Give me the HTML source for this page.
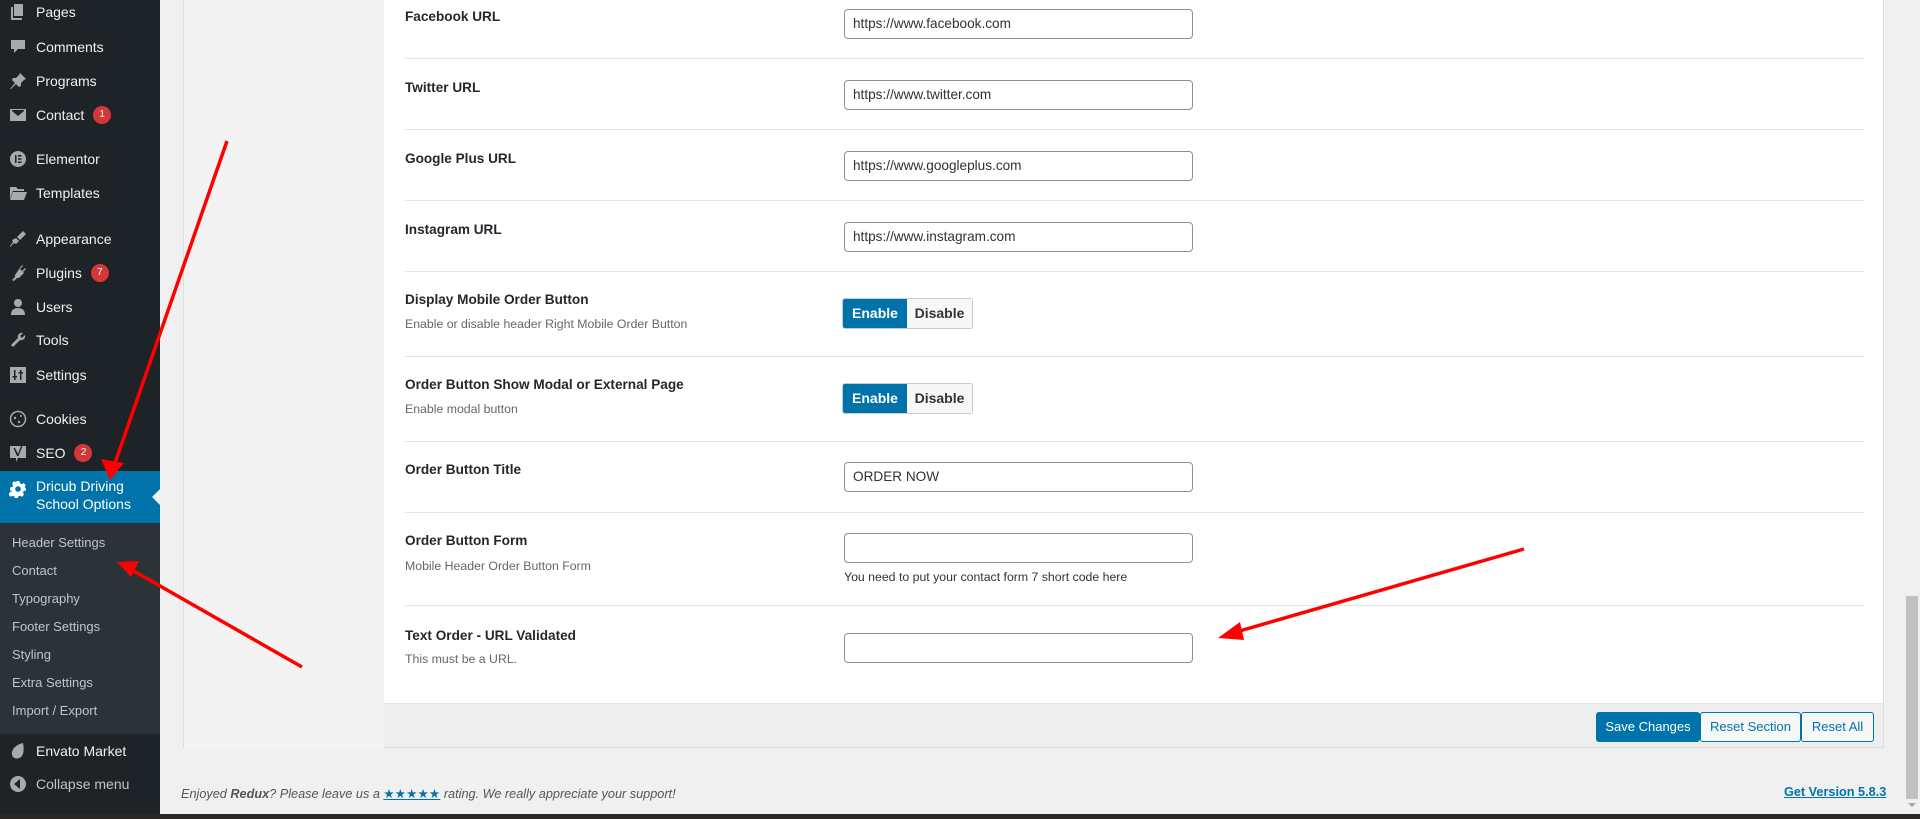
<!DOCTYPE html>
<html><head><meta charset="utf-8"><style>
*{box-sizing:border-box;margin:0;padding:0}
body{width:1920px;height:819px;overflow:hidden;background:#f0f0f0;font-family:"Liberation Sans",sans-serif;position:relative}
#sb{position:absolute;left:0;top:0;width:160px;height:814px;background:#1d2327}
.mi{position:absolute;left:0;width:160px;color:#f0f0f1;font-size:14px;line-height:18px}
.mi .ic{position:absolute;left:9px;top:0;width:18px;height:18px;color:#9ca2a7}
.mi .t{position:absolute;left:36px;top:0;white-space:nowrap}
.badge{display:inline-block;background:#d63638;color:#fff;border-radius:9px;font-size:10px;line-height:18px;min-width:18px;text-align:center;margin-left:5px;vertical-align:top}
#act{position:absolute;left:0;top:471px;width:160px;height:52px;background:#0073aa}
#sub{position:absolute;left:0;top:523px;width:160px;height:211px;background:#2c3338}
.si{position:absolute;left:12px;color:#c3c4c7;font-size:13px}
#nav{position:absolute;left:183px;top:0;width:202px;height:748px;background:#f3f3f3;border-left:1px solid #ddd;border-right:1px solid #e5e5e5}
#panel{position:absolute;left:384px;top:0;width:1500px;height:703px;background:#fff;border-right:1px solid #ddd}
#bar{position:absolute;left:384px;top:703px;width:1500px;height:45px;background:#eee;border-top:1px solid #e5e5e5;border-bottom:1px solid #ddd;border-right:1px solid #ddd}
.hr{position:absolute;left:405px;width:1459px;height:1px;background:#e5e5e5}
.lb{position:absolute;left:405px;font-size:13.6px;font-weight:bold;color:#23282d}
.ds{position:absolute;left:405px;font-size:12.3px;color:#666}
.in{position:absolute;left:844px;width:349px;height:30px;border:1px solid #8c8f94;border-radius:4px;font-size:13.6px;color:#2c3338;padding:6px 8px;background:#fff}
.bg{position:absolute;left:842px;width:131px;height:31px;border:1px solid #ccc;border-radius:3px;overflow:hidden;font-size:14px;font-weight:bold}
.bg .e{position:absolute;left:0;top:0;width:64px;height:100%;background:#0073aa;color:#fff;text-align:center;line-height:29px}
.bg .d{position:absolute;left:64px;top:0;right:0;height:100%;background:#f7f7f7;color:#333;text-align:center;line-height:29px}
.btn{position:absolute;top:712px;height:30px;font-size:13px;line-height:28px;text-align:center;border:1px solid #0073aa;border-radius:3px;color:#0073aa;background:#f6f7f7}
</style></head><body>
<div id="sb">
<div class="mi" style="top:3px"><svg class="ic" viewBox="0 0 18 18"><path fill="#a7aaad" d="M5 1h9v12H5zM2 4h2v11h9v2H2z"/></svg><span class="t">Pages</span></div>
<div class="mi" style="top:38px"><svg class="ic" viewBox="0 0 18 18"><path fill="#a7aaad" d="M2 2h14v9H9l-4 4v-4H2z"/></svg><span class="t">Comments</span></div>
<div class="mi" style="top:72px"><svg class="ic" viewBox="0 0 18 18"><path fill="#a7aaad" d="M11 1l6 6-2 1-3 3 0 3-2 1-3-3-5 5-1 0 5-6-3-3 1-2 3 0 3-3z"/></svg><span class="t">Programs</span></div>
<div class="mi" style="top:106px"><svg class="ic" viewBox="0 0 18 18"><path fill="#a7aaad" d="M1 3h16v12H1zM3 5l6 5 6-5v-1H3z"/></svg><span class="t">Contact <span class="badge">1</span></span></div>
<div class="mi" style="top:150px"><svg class="ic" viewBox="0 0 18 18"><circle cx="9" cy="9" r="8" fill="#a7aaad"/><path fill="#1d2327" d="M6 5h1.5v8H6zM9 5h3.5v1.5H9zM9 8.3h3.5v1.5H9zM9 11.5h3.5V13H9z"/></svg><span class="t">Elementor</span></div>
<div class="mi" style="top:184px"><svg class="ic" viewBox="0 0 18 18"><path fill="#a7aaad" d="M1 3h6l2 2h6v2H4l-3 8zM4 8h14l-3 8H1z"/></svg><span class="t">Templates</span></div>
<div class="mi" style="top:230px"><svg class="ic" viewBox="0 0 18 18"><path fill="#a7aaad" d="M14 1l3 3-6 6-3-3zM7 8l3 3-3 3-2-1-4 4 0-1 3-4-1-2z"/></svg><span class="t">Appearance</span></div>
<div class="mi" style="top:264px"><svg class="ic" viewBox="0 0 18 18"><path fill="#a7aaad" d="M13 1l1 1-3 3 2 2 3-3 1 1-3 3 1 1-5 5-2 0-3 3-2-1 3-3 0-2z"/></svg><span class="t">Plugins <span class="badge">7</span></span></div>
<div class="mi" style="top:298px"><svg class="ic" viewBox="0 0 18 18"><circle cx="9" cy="5" r="4" fill="#a7aaad"/><path fill="#a7aaad" d="M2 17c0-5 3-7 7-7s7 2 7 7z"/></svg><span class="t">Users</span></div>
<div class="mi" style="top:331px"><svg class="ic" viewBox="0 0 18 18"><path fill="#a7aaad" d="M16 4l-3 3-2-2 3-3c-3-1-6 2-5 5L2 14l2 2 7-7c3 1 6-2 5-5z"/></svg><span class="t">Tools</span></div>
<div class="mi" style="top:366px"><svg class="ic" viewBox="0 0 18 18"><path fill="#a7aaad" d="M1 1h16v16H1z"/><path fill="#1d2327" d="M5 4h1.5v10H5zM3.5 10h4.5v1.5H3.5zM11 4h1.5v10H11zM9.5 6h4.5v1.5H9.5z"/></svg><span class="t">Settings</span></div>
<div class="mi" style="top:410px"><svg class="ic" viewBox="0 0 18 18"><circle cx="9" cy="9" r="7.5" fill="none" stroke="#a7aaad" stroke-width="1.5"/><circle cx="6" cy="8" r="1.2" fill="#a7aaad"/><circle cx="10" cy="12" r="1.2" fill="#a7aaad"/><circle cx="12" cy="6" r="1" fill="#a7aaad"/></svg><span class="t">Cookies</span></div>
<div class="mi" style="top:444px"><svg class="ic" viewBox="0 0 18 18"><path fill="#a7aaad" d="M1 2h16v12H9l-2 4V14H1z"/><path fill="#1d2327" d="M6 4l3 6 3-8h1.5l-4 10H8L4.5 4z"/></svg><span class="t">SEO <span class="badge">2</span></span></div>
</div>
<div id="act"><svg style="position:absolute;left:9px;top:9px" width="18" height="18" viewBox="0 0 18 18"><path fill="#fff" d="M7.5 1h3l.5 2.3 1.5.8 2.2-1 2 2-1 2.2.7 1.5L17 7.5v3l-2.3.5-.7 1.5 1 2.2-2 2-2.2-1-1.5.7-.5 2.3h-3l-.5-2.3-1.5-.7-2.2 1-2-2 1-2.2L3.3 11 1 10.5v-3l2.3-.5.8-1.5-1-2.2 2-2 2.2 1L7 3.3z"/><circle cx="9" cy="9" r="2.8" fill="#0073aa"/></svg>
<div style="position:absolute;left:36px;top:6px;color:#fff;font-size:14px;line-height:18px">Dricub Driving<br>School Options</div>
<div style="position:absolute;right:0;top:18px;width:0;height:0;border-top:8px solid transparent;border-bottom:8px solid transparent;border-right:8px solid #f0f0f0"></div></div>
<div id="sub">
<div class="si" style="top:12px">Header Settings</div>
<div class="si" style="top:40px">Contact</div>
<div class="si" style="top:68px">Typography</div>
<div class="si" style="top:96px">Footer Settings</div>
<div class="si" style="top:124px">Styling</div>
<div class="si" style="top:152px">Extra Settings</div>
<div class="si" style="top:180px">Import / Export</div>
</div>
<div class="mi" style="top:742px"><svg class="ic" viewBox="0 0 18 18"><path fill="#a7aaad" d="M14 1C6 3 2 8 3 13c1 4 7 5 10 1 2-3 2-8 1-13z"/></svg><span class="t">Envato Market</span></div>
<div class="mi" style="top:775px"><svg class="ic" viewBox="0 0 18 18"><circle cx="9" cy="9" r="8" fill="#a7aaad"/><path fill="#1d2327" d="M11 4v10L5 9z"/></svg><span class="t" style="color:#c3c4c7">Collapse menu</span></div>
<div style="position:absolute;left:160px;top:0;width:23px;height:814px;background:#f0f0f0"></div>

<div id="nav"></div>
<div id="panel"></div>
<div id="bar"></div>

<div class="lb" style="top:9px">Facebook URL</div>
<div class="in" style="top:9px">https://www.facebook.com</div>
<div class="hr" style="top:58px"></div>
<div class="lb" style="top:80px">Twitter URL</div>
<div class="in" style="top:80px">https://www.twitter.com</div>
<div class="hr" style="top:129px"></div>
<div class="lb" style="top:151px">Google Plus URL</div>
<div class="in" style="top:151px">https://www.googleplus.com</div>
<div class="hr" style="top:200px"></div>
<div class="lb" style="top:222px">Instagram URL</div>
<div class="in" style="top:222px">https://www.instagram.com</div>
<div class="hr" style="top:271px"></div>
<div class="lb" style="top:292px">Display Mobile Order Button</div>
<div class="ds" style="top:317px">Enable or disable header Right Mobile Order Button</div>
<div class="bg" style="top:298px"><div class="e">Enable</div><div class="d">Disable</div></div>
<div class="hr" style="top:356px"></div>
<div class="lb" style="top:377px">Order Button Show Modal or External Page</div>
<div class="ds" style="top:402px">Enable modal button</div>
<div class="bg" style="top:383px"><div class="e">Enable</div><div class="d">Disable</div></div>
<div class="hr" style="top:441px"></div>
<div class="lb" style="top:462px">Order Button Title</div>
<div class="in" style="top:462px">ORDER NOW</div>
<div class="hr" style="top:512px"></div>
<div class="lb" style="top:533px">Order Button Form</div>
<div class="ds" style="top:559px">Mobile Header Order Button Form</div>
<div class="in" style="top:533px"></div>
<div style="position:absolute;left:844px;top:570px;font-size:12.3px;color:#333">You need to put your contact form 7 short code here</div>
<div class="hr" style="top:605px"></div>
<div class="lb" style="top:628px">Text Order - URL Validated</div>
<div class="ds" style="top:652px">This must be a URL.</div>
<div class="in" style="top:633px"></div>

<div class="btn" style="left:1596px;width:104px;background:#0073aa;color:#fff">Save Changes</div>
<div class="btn" style="left:1700px;width:101px">Reset Section</div>
<div class="btn" style="left:1801px;width:73px">Reset All</div>

<div style="position:absolute;left:181px;top:786px;font-size:12.7px;font-style:italic;color:#555">Enjoyed <b>Redux</b>? Please leave us a <span style="color:#0073aa;text-decoration:underline;font-style:normal">★★★★★</span> rating. We really appreciate your support!</div>
<div style="position:absolute;left:1784px;top:785px;font-size:12.7px;font-weight:bold;color:#0073aa;text-decoration:underline">Get Version 5.8.3</div>

<div style="position:absolute;left:1906px;top:596px;width:12px;height:203px;background:#c1c1c1"></div>
<div style="position:absolute;left:1908px;top:803px;width:0;height:0;border-left:4px solid transparent;border-right:4px solid transparent;border-top:4px solid #a3a3a3"></div>
<div style="position:absolute;left:0;top:814px;width:1920px;height:5px;background:#2a2826"></div>

<svg style="position:absolute;left:0;top:0" width="1920" height="819">
<g stroke="#f00" stroke-width="3.5" fill="#f00">
<line x1="227" y1="141" x2="114" y2="466"/><polygon points="110,480 101,459 124,463" stroke="none"/>
<line x1="302" y1="667" x2="132" y2="570"/><polygon points="117,562 139,561 131,577" stroke="none"/>
<line x1="1524" y1="549" x2="1236" y2="632"/><polygon points="1218,638 1240,622 1244,640" stroke="none"/>
</g></svg>
</body></html>
